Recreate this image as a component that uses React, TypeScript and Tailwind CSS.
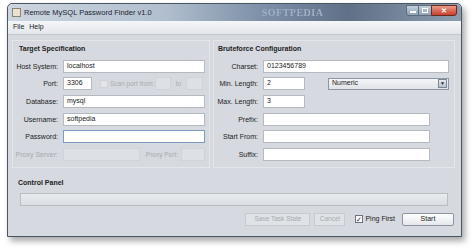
import React from 'react';

const font = { fontFamily: '"Liberation Sans", Arial, sans-serif' };

function Field({ w, value, disabled, focused }: { w: string; value?: string; disabled?: boolean; focused?: boolean }) {
  return (
    <div
      className={`${w} h-[13px] border flex items-center pl-[3px] text-[7px] whitespace-nowrap text-[#222] ${
        disabled ? 'bg-[#dde0e5] border-[#d0d3d8]' : focused ? 'bg-white border-[#7d9cc4]' : 'bg-white border-[#b5b9c0]'
      }`}
    >
      {value}
    </div>
  );
}

function Label({ text, disabled }: { text: string; disabled?: boolean }) {
  return (
    <div className={`flex justify-end whitespace-nowrap text-[7px] leading-[13px] ${disabled ? 'text-[#a8abb0]' : 'text-[#222]'}`}>
      {text}
    </div>
  );
}

export default function App() {
  return (
    <div className="w-[474px] h-[249px] bg-white pt-[3px] pl-[7px] overflow-hidden" style={font}>
      <div className="w-[455px] h-[234px] flex flex-col border border-[#4a5562] rounded-t-[5px] shadow-[3px_4px_6px_rgba(0,0,0,0.35)] bg-[#d6d9df]">
        {/* title bar */}
        <div className="h-[17px] flex items-center rounded-t-[5px] bg-[linear-gradient(90deg,#cdd6e0_0%,#b0bece_35%,#7f92a9_55%,#5f7087_75%,#8d9db0_100%)] pl-[4px]">
          <div className="w-[9px] h-[9px] bg-[#e8e2cf] border border-[#8a8470] mr-[3px]" />
          <span className="text-[7.5px] text-[#1d2530] whitespace-nowrap">Remote MySQL Password Finder v1.0</span>
          <span className="ml-[110px] text-[10px] font-bold text-[#9fb0c4] tracking-wider blur-[0.6px]" style={{ fontFamily: '"Liberation Serif", serif' }}>SOFTPEDIA</span>
          <div className="ml-auto flex h-[11px] mr-[4px] self-start mt-[1px]">
            <div className="w-[13px] h-full bg-[linear-gradient(#c4d0dc,#8fa1b6)] border border-[#5b6a7c] rounded-bl-[3px] flex items-end justify-center pb-[2px]">
              <div className="w-[6px] h-[2px] bg-white" />
            </div>
            <div className="w-[12px] h-full bg-[linear-gradient(#c4d0dc,#8fa1b6)] border-y border-[#5b6a7c] flex items-center justify-center">
              <div className="w-[6px] h-[5px] border border-white" />
            </div>
            <div className="w-[26px] h-full bg-[linear-gradient(#e99a8a,#c8402c)] border border-[#6b2a20] rounded-br-[3px] flex items-center justify-center text-white text-[7px] font-bold leading-none">
              ✕
            </div>
          </div>
        </div>
        {/* menu bar */}
        <div className="h-[14px] flex items-center gap-[5px] pl-[5px] bg-[linear-gradient(#f5f6f8,#e3e6eb)] border-b border-[#c3c7ce] text-[7px] text-[#222]">
          <span>File</span>
          <span>Help</span>
        </div>
        {/* content */}
        <div className="flex-1 flex flex-col px-[4px] pt-[5px]">
          <div className="flex gap-[3px]">
            {/* left panel */}
            <div className="w-[198px] h-[128px] border border-[#e4e6ea] pl-[6px] pt-[3px]">
              <div className="text-[7px] font-bold text-[#222] mb-[5px]">Target Specification</div>
              <div className="grid grid-cols-[39px_1fr] gap-x-[5px] gap-y-[4.7px] items-center">
                <Label text="Host System:" />
                <Field w="w-[142px]" value="localhost" />
                <Label text="Port:" />
                <div className="flex items-center">
                  <Field w="w-[29px]" value="3306" />
                  <div className="w-[8px] h-[8px] border border-[#cfd2d7] bg-[#e2e4e8] ml-[8px]" />
                  <span className="w-[45px] text-[6.5px] text-[#a8abb0] ml-[2px] whitespace-nowrap">Scan port from:</span>
                  <Field w="w-[16px]" disabled />
                  <span className="w-[15px] text-center text-[6.5px] text-[#a8abb0]">to</span>
                  <Field w="w-[17px]" disabled />
                </div>
                <Label text="Database:" />
                <Field w="w-[142px]" value="mysql" />
                <Label text="Username:" />
                <Field w="w-[142px]" value="softpedia" />
                <Label text="Password:" />
                <Field w="w-[142px]" focused />
                <Label text="Proxy Server:" disabled />
                <div className="flex items-center">
                  <Field w="w-[77px]" disabled />
                  <span className="w-[41px] text-right pr-[3px] text-[6.5px] text-[#a8abb0] whitespace-nowrap">Proxy Port:</span>
                  <Field w="w-[24px]" disabled />
                </div>
              </div>
            </div>
            {/* right panel */}
            <div className="w-[242px] h-[128px] border border-[#e4e6ea] pl-[4px] pt-[3px]">
              <div className="text-[7px] font-bold text-[#222] mb-[5px]">Bruteforce Configuration</div>
              <div className="grid grid-cols-[40px_1fr] gap-x-[5px] gap-y-[4.7px] items-center">
                <Label text="Charset:" />
                <Field w="w-[186px]" value="0123456789" />
                <Label text="Min. Length:" />
                <div className="flex items-center">
                  <Field w="w-[42px]" value="2" />
                  <div className="w-[121px] h-[12px] ml-[23px] border border-[#8d96a3] bg-[linear-gradient(#f4f5f7,#dfe2e7)] flex items-center pl-[3px] text-[7px] text-[#222]">
                    <span>Numeric</span>
                    <div className="ml-auto mr-[1px] w-[9px] h-[9px] bg-[linear-gradient(#e6eaf0,#b8c2cf)] border border-[#7b8594] flex items-center justify-center text-[5px] leading-none text-[#222]">▼</div>
                  </div>
                </div>
                <Label text="Max. Length:" />
                <Field w="w-[42px]" value="3" />
                <Label text="Prefix:" />
                <Field w="w-[167px]" />
                <Label text="Start From:" />
                <Field w="w-[167px]" />
                <Label text="Suffix:" />
                <Field w="w-[167px]" />
              </div>
            </div>
          </div>
          {/* control panel */}
          <div className="pl-[6px] pt-[10px]">
            <div className="text-[7px] font-bold text-[#222]">Control Panel</div>
            <div className="w-[428px] h-[13px] mt-[4px] ml-[2px] border border-[#b9bdc4] bg-[linear-gradient(#e9ebee,#dadde2)]" />
            <div className="flex items-center justify-end mt-[7px] mr-[3px] gap-[4px]">
              <div className="w-[65px] h-[13px] border border-[#c7cad0] bg-[#dfe2e6] text-[6.5px] text-[#a8abb0] flex items-center justify-center whitespace-nowrap">Save Task State</div>
              <div className="w-[31px] h-[13px] border border-[#c7cad0] bg-[#dfe2e6] text-[6.5px] text-[#a8abb0] flex items-center justify-center">Cancel</div>
              <div className="flex items-center ml-[6px]">
                <div className="w-[8px] h-[8px] border border-[#6b7380] bg-white flex items-center justify-center text-[7px] leading-none text-[#222]">✓</div>
                <span className="text-[7px] text-[#222] ml-[2px] whitespace-nowrap">Ping First</span>
              </div>
              <div className="w-[52px] h-[13px] ml-[3px] border border-[#8e96a2] rounded-[2px] bg-[linear-gradient(#ffffff,#e4e7eb)] text-[7px] text-[#222] flex items-center justify-center">Start</div>
            </div>
          </div>
        </div>
      </div>
    </div>
  );
}
